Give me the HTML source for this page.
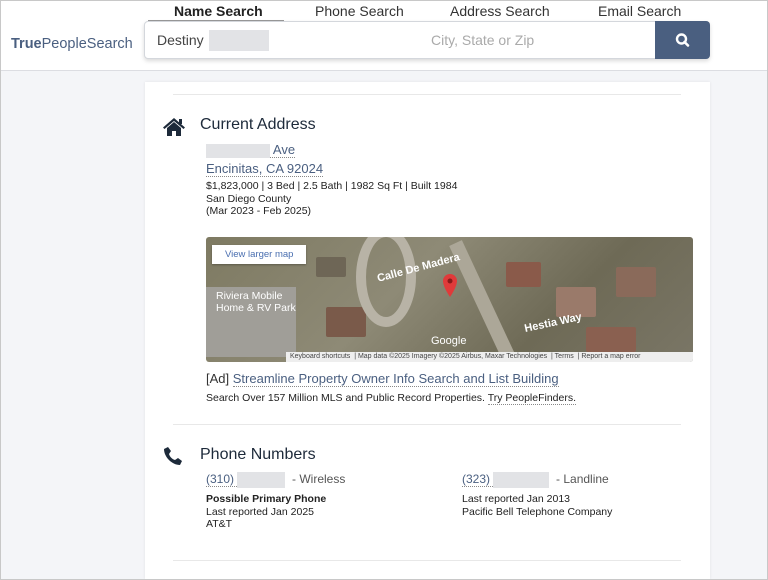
<!DOCTYPE html>
<html style="overflow:hidden;width:768px;height:580px"><head><style>
*{margin:0;padding:0;box-sizing:border-box}
body{width:768px;height:580px;overflow:hidden;background:#f4f5f8;font-family:"Liberation Sans",sans-serif;color:#222;position:relative}
.frame{position:absolute;left:0;top:0;width:768px;height:580px;border:1px solid #c8c8c8;pointer-events:none;z-index:9}
.hdr{position:absolute;left:0;top:0;width:768px;height:71px;background:#fff;border-bottom:1px solid #dcdde2}
.tab{position:absolute;top:3px;font-size:14px;color:#333}
.logo{position:absolute;left:11px;top:36px;font-size:14.5px;color:#4a5f80}
.box{position:absolute;left:144px;top:21px;width:566px;height:38px;border:1px solid #d4d7dc;border-radius:4px;background:#fff;box-shadow:0 2px 4px rgba(0,0,0,.15)}
.btn{position:absolute;right:-1px;top:-1px;width:55px;height:38px;background:#4a5f80;border-radius:0 4px 4px 0}
.blur{display:inline-block;background:#e2e3e6;vertical-align:middle}
.card{position:absolute;left:145px;top:82px;width:565px;height:497px;background:#fff;box-shadow:0 0 3px rgba(0,0,0,.08);overflow:hidden}
.hr{position:absolute;left:28px;width:508px;height:1px;background:#e8e8e8}
.h{position:absolute;font-size:16px;color:#1d2a3a}
.lnk{color:#4a5f80;border-bottom:1px dotted #888;font-size:13px}
.sm{font-size:10.5px;line-height:12.5px;color:#222}
.hs{position:absolute;background:#6e6656;border-radius:2px}
</style></head><body>
<div class="frame"></div>
<div class="hdr">
<div class="tab" style="left:174px;font-weight:bold;color:#222">Name Search</div>
<div style="position:absolute;left:148px;top:20px;width:136px;height:2px;background:#999"></div>
<div class="tab" style="left:315px">Phone Search</div>
<div class="tab" style="left:450px">Address Search</div>
<div class="tab" style="left:598px">Email Search</div>
<div class="logo"><b>True</b>PeopleSearch</div>
<div class="box">
<div style="position:absolute;left:12px;top:10px;font-size:14px;color:#444">Destiny</div>
<div class="blur" style="position:absolute;left:64px;top:8px;width:60px;height:21px"></div>
<div style="position:absolute;left:286px;top:10px;font-size:14px;color:#aaa">City, State or Zip</div>
<div class="btn"><svg width="55" height="38" viewBox="0 0 55 38"><circle cx="26.5" cy="18" r="4.5" fill="none" stroke="#fff" stroke-width="2.4"/><path d="M29.5 21l3.5 3.5" stroke="#fff" stroke-width="2.6" stroke-linecap="round"/></svg></div>
</div>
</div>
<div class="card">
<div class="hr" style="top:12px"></div>
<svg style="position:absolute;left:18px;top:35px" width="22" height="19" viewBox="0 0 22 19"><path d="M11 1L0 10.5l1.5 1.5L11 4l9.5 8 1.5-1.5z M4 11v8h5v-5h4v5h5v-8L11 5z" fill="#1d2a3a"/><rect x="16" y="2" width="3" height="5" fill="#1d2a3a"/></svg>
<div class="h" style="left:55px;top:34px">Current Address</div>
<div style="position:absolute;left:61px;top:59px"><span class="lnk"><span class="blur" style="width:64px;height:14px"></span> Ave</span></div>
<div style="position:absolute;left:61px;top:78px"><span class="lnk">Encinitas, CA 92024</span></div>
<div class="sm" style="position:absolute;left:61px;top:98px">$1,823,000 | 3 Bed | 2.5 Bath | 1982 Sq Ft | Built 1984<br>San Diego County<br>(Mar 2023 - Feb 2025)</div>
<div style="position:absolute;left:61px;top:155px;width:487px;height:125px;border-radius:3px;overflow:hidden;background:linear-gradient(135deg,#7e7a62,#8e8a76 40%,#6e6a56 70%,#7a7666)">
<div class="hs" style="left:110px;top:20px;width:30px;height:20px"></div>
<div class="hs" style="left:300px;top:25px;width:35px;height:25px;background:#8a5a4a"></div>
<div class="hs" style="left:350px;top:50px;width:40px;height:30px;background:#9a7a6a"></div>
<div class="hs" style="left:410px;top:30px;width:40px;height:30px;background:#8a6a5a"></div>
<div class="hs" style="left:120px;top:70px;width:40px;height:30px;background:#7a5a4a"></div>
<div class="hs" style="left:380px;top:90px;width:50px;height:25px;background:#8a6050"></div>
<div style="position:absolute;left:150px;top:-10px;width:60px;height:100px;border:10px solid #b8b3a6;border-radius:50%"></div>
<div style="position:absolute;left:270px;top:0;width:14px;height:130px;background:#aca798;transform:rotate(-25deg)"></div>
<div style="position:absolute;left:0;top:50px;width:90px;height:70px;background:#a09e98"></div>
<div style="position:absolute;left:6px;top:8px;width:94px;height:19px;background:#fff;font-size:9.5px;color:#4a6fb0;padding:4px 0 0 13px;box-shadow:0 1px 2px rgba(0,0,0,.3)">View larger map</div>
<svg style="position:absolute;left:236px;top:36px" width="16" height="26"><path d="M8 1a7 7 0 0 0-7 7c0 6 7 16 7 16s7-10 7-16a7 7 0 0 0-7-7z" fill="#e03a3a"/><circle cx="8" cy="8" r="2.5" fill="#8a1a1a"/></svg>
<div style="position:absolute;left:170px;top:25px;color:#fff;font-size:11px;font-weight:bold;transform:rotate(-15deg)">Calle De Madera</div>
<div style="position:absolute;left:318px;top:80px;color:#fff;font-size:11px;font-weight:bold;transform:rotate(-12deg)">Hestia Way</div>
<div style="position:absolute;left:10px;top:53px;color:#fff;font-size:10.5px;line-height:12px">Riviera Mobile<br>Home &amp; RV Park</div>
<div style="position:absolute;left:225px;top:98px;color:#fff;font-size:11px">Google</div>
<div style="position:absolute;left:80px;top:115px;width:407px;height:10px;background:#eee;font-size:7px;color:#444;padding:1px 4px;white-space:nowrap">Keyboard shortcuts &nbsp;| Map data ©2025 Imagery ©2025 Airbus, Maxar Technologies &nbsp;| Terms &nbsp;| Report a map error</div>
</div>
<div style="position:absolute;left:61px;top:289px;font-size:13px;color:#333">[Ad] <span class="lnk">Streamline Property Owner Info Search and List Building</span></div>
<div class="sm" style="position:absolute;left:61px;top:310px">Search Over 157 Million MLS and Public Record Properties. <span style="border-bottom:1px dotted #888">Try PeopleFinders.</span></div>
<div class="hr" style="top:342px"></div>
<svg style="position:absolute;left:18px;top:364px" width="20" height="20" viewBox="0 0 20 20"><path d="M5 1l3 4-2 3c1 3 3 5 6 6l3-2 4 3-2 4C9 19 1 11 1 3z" fill="#1d2a3a"/></svg>
<div class="h" style="left:55px;top:364px">Phone Numbers</div>
<div style="position:absolute;left:61px;top:390px;font-size:12px;color:#555"><span class="lnk" style="font-size:12px">(310) <span class="blur" style="width:48px;height:16px"></span></span> &nbsp;- Wireless</div>
<div class="sm" style="position:absolute;left:61px;top:411px"><b>Possible Primary Phone</b><br>Last reported Jan 2025<br>AT&amp;T</div>
<div style="position:absolute;left:317px;top:390px;font-size:12px;color:#555"><span class="lnk" style="font-size:12px">(323) <span class="blur" style="width:56px;height:16px"></span></span> &nbsp;- Landline</div>
<div class="sm" style="position:absolute;left:317px;top:411px">Last reported Jan 2013<br>Pacific Bell Telephone Company</div>
<div class="hr" style="top:478px"></div>
</div>
</body></html>
